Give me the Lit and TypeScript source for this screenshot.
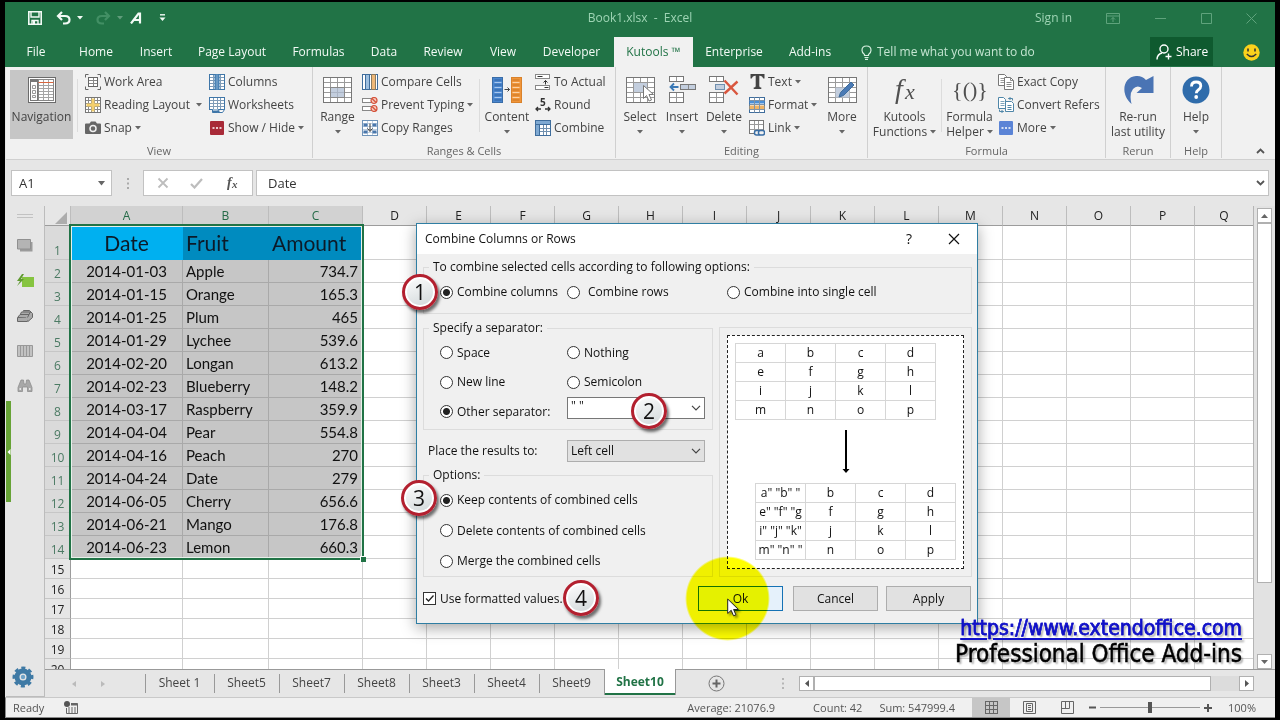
import { LitElement, html, css, svg, nothing, TemplateResult } from 'lit';
import { customElement } from 'lit/decorators.js';
import { classMap } from 'lit/directives/class-map.js';

type Row = [string, string, string];

const DATA: Row[] = [
  ['2014-01-03', 'Apple', '734.7'],
  ['2014-01-15', 'Orange', '165.3'],
  ['2014-01-25', 'Plum', '465'],
  ['2014-01-29', 'Lychee', '539.6'],
  ['2014-02-20', 'Longan', '613.2'],
  ['2014-02-23', 'Blueberry', '148.2'],
  ['2014-03-17', 'Raspberry', '359.9'],
  ['2014-04-04', 'Pear', '554.8'],
  ['2014-04-16', 'Peach', '270'],
  ['2014-04-24', 'Date', '279'],
  ['2014-06-05', 'Cherry', '656.6'],
  ['2014-06-21', 'Mango', '176.8'],
  ['2014-06-23', 'Lemon', '660.3'],
];
const COLS = 'ABCDEFGHIJKLMNOPQ'.split('');
const TABS = ['File', 'Home', 'Insert', 'Page Layout', 'Formulas', 'Data', 'Review', 'View', 'Developer', 'Kutools ™', 'Enterprise', 'Add-ins'];
const SHEETS = ['Sheet 1', 'Sheet5', 'Sheet7', 'Sheet8', 'Sheet3', 'Sheet4', 'Sheet9', 'Sheet10'];

const ic = (w: number, h: number, body: TemplateResult) =>
  html`<svg width=${w} height=${h} viewBox="0 0 ${w} ${h}" fill="none" aria-hidden="true">${body}</svg>`;

/* A ruled rectangle: the base of most spreadsheet icons. */
const grid = (x: number, y: number, w: number, h: number, c: number, r: number, stroke = '#777', inner = '#9a9a9a', fill = '#fff') => {
  let d = '';
  for (let i = 1; i < c; i++) d += `M${Math.round(x + (w * i) / c)} ${y}v${h}`;
  for (let i = 1; i < r; i++) d += `M${x} ${Math.round(y + (h * i) / r)}h${w}`;
  return svg`<rect x=${x} y=${y} width=${w} height=${h} fill=${fill}/><path d=${d} stroke=${inner}/><rect x=${x} y=${y} width=${w} height=${h} stroke=${stroke}/>`;
};
const half = (b: TemplateResult) => svg`<g transform="translate(.5 .5)">${b}</g>`;

const caret = html`<svg class="caret" width="6" height="4" viewBox="0 0 6 4" aria-hidden="true"><path d="M0 0h6L3 3.6z" fill="#666"/></svg>`;
const chevron = html`<svg class="chev" width="10" height="6" viewBox="0 0 10 6" fill="none" aria-hidden="true"><path d="M1 .8 5 4.8 9 .8" stroke="#444" stroke-width="1.2"/></svg>`;

const I = {
  nav: ic(28, 26, half(svg`<rect x="0" y="0" width="27" height="25" fill="#fff" stroke="#6b6b6b"/>${grid(2, 2, 7, 21, 1, 1)}${grid(10, 2, 15, 21, 3, 7, '#888', '#a5a5a5')}<path d="M2 3.500h7" stroke="#777" stroke-width="2"/><path d="M10 5h15" stroke="#d9673f"/><path d="M4 8h3v3h-3zM4 13h3v3h-3zM4 18h3v2h-3z" stroke="#999"/>`)),
  workArea: ic(16, 16, half(svg`<path d="M3 0H0v3M12 0h3v3M3 15H0v-3M12 15h3v-3" stroke="#666"/>${grid(3, 3, 9, 9, 2, 3, '#666', '#888')}`)),
  reading: ic(16, 16, half(svg`${grid(0, 0, 15, 15, 5, 5, '#777', '#888')}<path d="M7.500 1v13M1 7.500h13" stroke="#f4cf6c" stroke-width="3"/>`)),
  snap: ic(16, 13, svg`<path d="M1 2.500h3.500L6 .5h4.500L12 2.500h3q1 0 1 1V12q0 1-1 1H1q-1 0-1-1V3.500q0-1 1-1z" fill="#666"/><circle cx="8" cy="7.500" r="3" stroke="#f1f1f1" stroke-width="1.500"/>`),
  columns: ic(16, 16, half(svg`${grid(0, 0, 15, 15, 4, 5, '#3f76a8', '#7f9cb8')}<rect x="5" y="0" width="5" height="15" fill="#4a83b6"/><path d="M7.500 0v15" stroke="#89aed0"/>`)),
  worksheets: ic(16, 16, half(svg`${grid(0, 0, 15, 12, 4, 4, '#3f76a8', '#7f9cb8')}<path d="M3 12v3h5l1-3M8 15h5l2-3" stroke="#3f76a8" fill="#fff"/><path d="M3 14h7" stroke="#3f76a8" stroke-width="2"/>`)),
  showHide: ic(14, 14, svg`<rect width="14" height="14" rx="1" fill="#a82a38"/><path d="M2.500 7h2M6 7h2M9.500 7h2" stroke="#fff" stroke-width="1.500"/>`),
  range: ic(29, 26, half(svg`${grid(0, 0, 28, 25, 4, 5)}<rect x="7" y="10" width="14" height="10" fill="#c3cede"/><path d="M7 15h14M14 10v10" stroke="#aab4c4"/><rect x="7" y="10" width="14" height="10" stroke="#888"/>`)),
  compare: ic(16, 16, half(svg`<rect x="0" y="0" width="15" height="15" fill="#fff" stroke="#3f6d9c"/><rect x="3" y="0" width="4" height="15" fill="#9dbfe0" stroke="#3f6d9c"/><rect x="9" y="0" width="4" height="15" fill="#efb878" stroke="#8a7a60"/>`)),
  prevent: ic(16, 15, half(svg`<rect x="0" y="1" width="9" height="4" fill="#fff" stroke="#888"/><rect x="0" y="9" width="9" height="4" fill="#fff" stroke="#888"/><g stroke="#d5533b" fill="#f6c9bd" stroke-width="1.200"><circle cx="11.500" cy="3" r="3"/><circle cx="11.500" cy="11" r="3"/><path d="M9.500 1l4 4M9.500 9l4 4"/></g>`)),
  copyRanges: ic(16, 16, half(svg`${grid(0, 0, 15, 15, 3, 5, '#6f93b8', '#c0d0e0')}<path d="M1 3h4v3H1zM10 3h4v3h-4zM1 10h4v3H1zM10 10h4v3h-4z" fill="#4a77ab"/><path d="M7.500 3v7M5 8l2.500 3L10 8" stroke="#333"/>`)),
  content: ic(30, 26, half(svg`<rect x="0" y="0" width="10" height="25" fill="#4a86cf" stroke="#3a6da8"/><path d="M2 5h7M2 10h7M2 15h7M2 20h7" stroke="#a9c8ee"/><path d="M2 2.500h7M2 7.500h7M2 12.500h7M2 17.500h7M2 22.500h7" stroke="#2e62a0"/><rect x="19" y="0" width="10" height="25" fill="#f0953a" stroke="#d9822b"/><path d="M20 5h7M20 10h7M20 15h7M20 20h7" stroke="#fbd3a4"/><path d="M20 2.500h7M20 7.500h7M20 12.500h7M20 17.500h7M20 22.500h7" stroke="#c97720"/><path d="M12 12h5M15 10l2 2-2 2" stroke="#444"/>`)),
  actual: ic(16, 16, half(svg`<rect x="0" y="0" width="14" height="4" fill="#fff" stroke="#888"/><rect x="0" y="11" width="14" height="4" fill="#fff" stroke="#888"/><path d="M2 2h5M9 13h4" stroke="#333"/><path d="M10 10V6M8 8l2-2 2 2" stroke="#333"/>`)),
  round: ic(16, 20, svg`<text x="5" y="11" font-size="10" font-weight="700" font-family="Open Sans, sans-serif" fill="#333">5</text><path d="M1 14h5M3 12l-2 2 2 2M10 14h5M13 12l2 2-2 2" stroke="#333" stroke-width="1.300"/>`),
  combine: ic(16, 16, half(svg`${grid(0, 0, 15, 15, 4, 4, '#3f6d9c', '#6f8fae')}<rect x="0" y="0" width="15" height="4" fill="#7fa9d2" stroke="#3f6d9c"/><rect x="0" y="4" width="4" height="11" fill="#7fa9d2" stroke="#3f6d9c"/>`)),
  select: ic(29, 26, half(svg`${grid(0, 0, 28, 25, 4, 5)}<rect x="7" y="5" width="14" height="10" fill="#c3cede" stroke="#999"/><path d="M17 8v13l3-3 2.500 5.500 2.500-1-2.500-5.500H27z" fill="#fff" stroke="#777"/>`)),
  insert: ic(27, 28, half(svg`${grid(0, 0, 14, 5, 2, 1)}${grid(0, 16, 14, 10, 2, 2)}${grid(11, 8, 15, 5, 2, 1, '#777', '#888', '#c3cede')}<path d="M9 10.500H1M4.500 7l-3.500 3.500L4.500 14" stroke="#3a78b5" stroke-width="1.800"/>`)),
  del: ic(30, 28, half(svg`${grid(0, 0, 14, 5, 2, 1)}${grid(0, 16, 14, 10, 2, 2)}<rect x="6" y="8" width="9" height="5" fill="#c3cede" stroke="#6f8fae"/><path d="M15 4l13 14M28 5L15 17" stroke="#d9573f" stroke-width="2.400"/>`)),
  text: ic(15, 15, svg`<path d="M.5 0h14v4.500h-1.200Q12.500 2 10 1.800H9.300V12q0 1.500 2 1.600V15H3.700v-1.400q2-.1 2-1.600V1.800H5Q2.500 2 1.700 4.500H.5z" fill="#444"/>`),
  format: ic(16, 16, half(svg`<rect x="0" y="0" width="15" height="15" fill="#fff" stroke="#3f6d9c"/><rect x="0" y="3" width="15" height="3" fill="#4a90d9"/><rect x="0" y="8" width="15" height="4" fill="#f0b465"/><path d="M0 3h15M0 7h15M0 12h15M5 0v15M10 0v15" stroke="#7f93a8"/>`)),
  link: ic(16, 16, half(svg`${grid(0, 0, 14, 13, 3, 3)}<g stroke="#3a6ea5" stroke-width="1.500" fill="#f1f1f1"><rect x="5" y="10" width="6" height="4.500" rx="2"/><rect x="9" y="10" width="6" height="4.500" rx="2"/></g>`)),
  more: ic(29, 26, half(svg`${grid(0, 0, 28, 25, 4, 5)}<rect x="7" y="10" width="14" height="10" fill="#c3cede"/><path d="M22.500 4.500l3 3L15 18l-4.500 1.500L12 15z" fill="#4a7ab5" stroke="#3f6d9c"/>`)),
  fx: ic(28, 38, svg`<g font-family="Liberation Serif, serif" font-style="italic" fill="#505050"><text x="4" y="27" font-size="28">f</text><text x="14" y="28" font-size="22">x</text></g>`),
  braces: ic(40, 36, svg`<text x="20" y="25" text-anchor="middle" font-family="Liberation Serif, serif" font-size="22" fill="#505050">{()}</text>`),
  exact: ic(16, 16, half(svg`<path d="M0 0h6l2 2v9H0z" fill="#fff" stroke="#777"/><path d="M2 4h4M2 6h4M2 8h4" stroke="#999"/><path d="M6 3h6l3 3v9H6z" fill="#fff" stroke="#777"/><path d="M12 3v3h3M8 8h5M8 10h5M8 12h5" stroke="#888"/>`)),
  convert: ic(16, 16, half(svg`<path d="M0 0h5l2 2v9H0z" fill="#fff" stroke="#4f86a8"/><path d="M2 4h4M2 6h4M2 8h4" stroke="#7fa5bd"/><path d="M7 4h6l2 2v8H7z" fill="#fff" stroke="#4f86a8"/><path d="M9 8h4M9 10h4M9 12h4M10 1h4v2M12 0l-2 1 2 1M1 12v2h4M3 13l2 1-2 1" stroke="#4f86a8"/>`)),
  moreBlue: ic(14, 14, svg`<rect width="14" height="14" rx="1" fill="#5b84d6"/><path d="M2.500 7h2M6 7h2M9.500 7h2" stroke="#fff" stroke-width="1.500"/>`),
  rerun: ic(31, 30, svg`<path d="M8.500 29C-3 19 0 2 13 1q6-.5 10 4l7.500-4v17H13.500l5.500-5q-5-3.500-9 1-4 5-1.500 15z" fill="#4a74b4"/>`),
  help: ic(28, 28, svg`<circle cx="14" cy="14" r="13.500" fill="#2f6cab"/><path d="M9.500 10.500q0-4.500 4.700-4.500 4.600 0 4.600 4 0 2.300-2.600 4-1.900 1.300-1.900 3.300" stroke="#fff" stroke-width="2.800"/><circle cx="14.200" cy="21" r="1.900" fill="#fff"/>`),
};

const base = css`
  *, *::before, *::after { box-sizing: border-box; }
  button, input, select { font: inherit; color: inherit; margin: 0; }
  button { background: none; border: 0; padding: 0; cursor: default; }
  svg { display: block; flex: none; }
`;

@customElement('excel-ribbon')
class ExcelRibbon extends LitElement {
  static styles = [base, css`
    :host { display: flex; background: #f1f1f1; border-bottom: 1px solid #d0d0d0; color: #444; font-size: 12px; height: 93px; }
    .group { display: grid; grid-template-rows: 73px 18px; border-right: 1px solid #d0d0d0; margin-bottom: 1px; }
    .cols { display: grid; }
    .view { width: 307px; } .view .cols { grid-template-columns: 67px 132px 1fr; padding-left: 4px; }
    .ranges { width: 303px; } .ranges .cols { grid-template-columns: 49px 117px 56px 1fr; }
    .editing { width: 252px; } .editing .cols { grid-template-columns: 42px 42px 42px 73px 48px; padding-left: 3px; }
    .formula { width: 238px; } .formula .cols { grid-template-columns: 73px 57px 1fr; }
    .rerun { width: 65px; } .help { width: 51px; }
    .name { text-align: center; font-size: 11px; line-height: 22px; color: #666; white-space: nowrap; }
    .big { display: flex; flex-direction: column; align-items: center; width: 100%; margin-top: 3px; height: 69px; line-height: 16px; white-space: nowrap; }
    .big .pic { height: 39px; display: grid; place-items: center; }
    .big .line { display: flex; align-items: center; justify-content: center; gap: 3px; height: 15px; }
    .big.on { background: #c6c6c6; width: 63px; }
    .col { display: grid; grid-template-rows: repeat(3, 23px); padding-top: 3px; justify-items: start; }
    .ruled { position: relative; }
    .ruled::before { content: ''; position: absolute; left: 0; top: 12px; bottom: 8px; border-left: 1px solid #dcdcdc; }
    .indent { padding-left: 8px; } .indent4 { padding-left: 4px; }
    .small { display: flex; align-items: center; gap: 3px; height: 23px; white-space: nowrap; }
    .small .pic { width: 16px; display: grid; place-items: center; }
    .wide .caret { margin-left: 3px; }
    .collapse { margin-left: auto; align-self: end; padding: 8px 10px 5px; }
  `];

  big(icon: TemplateResult, a: string, b = '', arrow = true, cls = '') {
    return html`<div class=${cls}><button class=${classMap({ big: true, on: a === 'Navigation' })}>
      <span class="pic">${icon}</span><span class="line">${a}</span>
      <span class="line">${b}${arrow ? caret : nothing}</span></button></div>`;
  }
  small(icon: TemplateResult, label: string, arrow = false, cls = '') {
    return html`<button class="small ${cls}"><span class="pic">${icon}</span><span>${label}</span>${arrow ? caret : nothing}</button>`;
  }
  group(cls: string, name: string, body: TemplateResult) {
    return html`<section class="group ${cls}"><div class="cols">${body}</div><div class="name">${name}</div></section>`;
  }
  render() {
    return html`
      ${this.group('view', 'View', html`
        ${this.big(I.nav, 'Navigation', '', false)}
        <div class="col ruled indent">${this.small(I.workArea, 'Work Area')}${this.small(I.reading, 'Reading Layout', true, 'wide')}${this.small(I.snap, 'Snap', true)}</div>
        <div class="col">${this.small(I.columns, 'Columns')}${this.small(I.worksheets, 'Worksheets')}${this.small(I.showHide, 'Show / Hide', true)}</div>`)}
      ${this.group('ranges', 'Ranges & Cells', html`
        ${this.big(I.range, 'Range')}
        <div class="col">${this.small(I.compare, 'Compare Cells')}${this.small(I.prevent, 'Prevent Typing', true)}${this.small(I.copyRanges, 'Copy Ranges')}</div>
        ${this.big(I.content, 'Content', '', true, 'ruled')}
        <div class="col">${this.small(I.actual, 'To Actual')}${this.small(I.round, 'Round')}${this.small(I.combine, 'Combine')}</div>`)}
      ${this.group('editing', 'Editing', html`
        ${this.big(I.select, 'Select')}${this.big(I.insert, 'Insert')}${this.big(I.del, 'Delete')}
        <div class="col indent4">${this.small(I.text, 'Text', true)}${this.small(I.format, 'Format', true)}${this.small(I.link, 'Link', true)}</div>
        ${this.big(I.more, 'More')}`)}
      ${this.group('formula', 'Formula', html`
        ${this.big(I.fx, 'Kutools', 'Functions')}
        ${this.big(I.braces, 'Formula', 'Helper', true, 'ruled')}
        <div class="col">${this.small(I.exact, 'Exact Copy')}${this.small(I.convert, 'Convert Refers')}${this.small(I.moreBlue, 'More', true)}</div>`)}
      ${this.group('rerun', 'Rerun', this.big(I.rerun, 'Re-run', 'last utility', false))}
      ${this.group('help', 'Help', this.big(I.help, 'Help'))}
      <button class="collapse" aria-label="Collapse the ribbon"><svg width="9" height="6" viewBox="0 0 9 6" fill="none"><path d="M1 5 4.500 1.500 8 5" stroke="#555" stroke-width="1.800"/></svg></button>`;
  }
}

@customElement('excel-sheet')
class ExcelSheet extends LitElement {
  static styles = [base, css`
    :host { display: block; position: relative; min-height: 0; }
    .clip { height: 100%; overflow: hidden; background: #fff; border-right: 1px solid #b5b5b5; }
    table { table-layout: fixed; width: 100%; border-collapse: separate; border-spacing: 0; color: #111; }
    .c-n { width: 26px; } .c-a { width: 112px; } .c-b { width: 86px; } .c-c { width: 94px; } .c-x { width: 64px; }
    th, td { padding: 0; font-weight: 400; overflow: hidden; white-space: nowrap; }
    thead th { height: 20px; background: #e6e6e6; border-right: 1px solid #bdbdbd; border-bottom: 1px solid #9c9c9c; font-size: 12px; line-height: 18px; color: #222; }
    thead th:last-child { border-right: 0; }
    tbody th { background: #e6e6e6; border-right: 1px solid #9c9c9c; border-bottom: 1px solid #c6c6c6; font-size: 12px; line-height: 17px; vertical-align: bottom; color: #222; }
    thead th.sel-h { background: #d2d2d2; color: #256b48; }
    tbody th.sel-h { background: #dadada; color: #4b7a63; }
    td { border-right: 1px solid #d0d0d0; border-bottom: 1px solid #d0d0d0; }
    td:last-child { border-right: 0; }
    .r-head td, .r-head th { height: 34px; }
    .r-data td, .r-data th { height: 23px; }
    .r-empty td, .r-empty th { height: 20px; }
    .sel { background: #c6c6c6; border-color: #a9a9a9; font: 15px/20px Lato, sans-serif; }
    .date { text-align: center; } .fruit { padding-left: 3px; } .num { text-align: right; padding-right: 4px; }
    .title { font-size: 21px; line-height: 26px; background: #008bbf; border-color: #008bbf; color: #0c1a28; text-align: left; padding-left: 3px; }
    .title.date { background: #00b0f0; border-color: #00b0f0; text-align: center; padding-left: 0; }
    .corner { display: block; margin: 4px 3px 0 auto; }
    .range { position: absolute; left: 24px; top: 18px; width: 295px; height: 336px; border: 2px solid #217346; box-shadow: inset 0 0 0 1px #e8f0ea; pointer-events: none; }
    .range::after { content: ''; position: absolute; right: -4px; bottom: -4px; width: 6px; height: 6px; background: #217346; border: 1px solid #fff; border-width: 1px 0 0 1px; }
  `];
  render() {
    return html`<div class="clip"><table>
      <colgroup><col class="c-n"><col class="c-a"><col class="c-b"><col class="c-c">${COLS.slice(3, -1).map(() => html`<col class="c-x">`)}<col></colgroup>
      <thead><tr><th><svg class="corner" width="12" height="12" viewBox="0 0 12 12" aria-hidden="true"><path d="M12 0v12H0z" fill="#adadad"/></svg></th>
        ${COLS.map((c, i) => html`<th class=${i < 3 ? 'sel-h' : ''}>${c}</th>`)}</tr></thead>
      <tbody>
        <tr class="r-head"><th class="sel-h">1</th><td class="sel title date">Date</td><td class="sel title">Fruit</td><td class="sel title">Amount</td>${COLS.slice(3).map(() => html`<td></td>`)}</tr>
        ${DATA.map((r, i) => html`<tr class="r-data"><th class="sel-h">${i + 2}</th><td class="sel date">${r[0]}</td><td class="sel fruit">${r[1]}</td><td class="sel num">${r[2]}</td>${COLS.slice(3).map(() => html`<td></td>`)}</tr>`)}
        ${[15, 16, 17, 18, 19, 20].map((n) => html`<tr class="r-empty"><th>${n}</th>${COLS.map(() => html`<td></td>`)}</tr>`)}
      </tbody></table></div>
      <div class="range"></div>`;
  }
}

@customElement('combine-dialog')
class CombineDialog extends LitElement {
  static styles = [base, css`
    :host { display: block; width: 562px; background: #f0f0f0; border: 1px solid #2f7ea3; box-shadow: 0 4px 14px rgba(0, 0, 0, .35); font-size: 12px; color: #111; }
    header { display: flex; align-items: center; height: 30px; background: #fff; padding-left: 8px; }
    h2 { font: inherit; margin: 0 auto 0 0; }
    header button { width: 46px; height: 30px; display: grid; place-items: center; }
    header button:first-of-type { width: 44px; font-size: 14px; }
    form { padding: 5px 5px 0 6px; }
    fieldset { margin: 0; min-width: 0; border: 1px solid #dcdcdc; padding: 0 5px; }
    legend { padding: 0 4px; line-height: 16px; }
    label { display: flex; align-items: center; gap: 4px; white-space: nowrap; }
    .radio { appearance: none; width: 13px; height: 13px; border: 1px solid #333; border-radius: 50%; background: #fff; flex: none; }
    .radio:checked { background: radial-gradient(circle, #222 0 3px, #fff 4px); }
    .modes { display: grid; grid-template-columns: 127px 160px 1fr; height: 38px; padding: 7px 0 11px 11px; }
    .far { gap: 8px; }
    .split { display: grid; grid-template-columns: 290px 1fr; gap: 6px; margin-top: 6px; }
    .seps { display: grid; grid-template-columns: 127px 138px; grid-template-rows: 29px 30px 29px; padding: 2px 0 3px 11px; }
    .opts { display: grid; grid-template-rows: 30px 31px 30px; padding: 2px 0 0 11px; }
    .place { display: grid; grid-template-columns: 139px 138px; height: 22px; margin: 10px 0 5px 5px; align-items: center; }
    .pick { display: grid; align-items: center; height: 22px; }
    .pick > * { grid-area: 1 / 1; }
    .pick select { appearance: none; width: 100%; height: 22px; padding: 0 3px; border: 1px solid #adadad; border-radius: 0; background: #e1e1e1; line-height: 20px; }
    .pick .chev { justify-self: end; margin-right: 4px; pointer-events: none; }
    .edit { align-self: start; }
    .pick.edit select { background: #fff; border-color: #777; line-height: 16px; padding: 0 3px 4px; }
    .preview { margin-top: 7px; padding: 7px; }
    .canvas { height: 100%; display: flex; flex-direction: column; justify-content: space-between; background: #fff; border: 1px dashed #222; padding: 7px 7px 8px; }
    .canvas table { border-collapse: collapse; table-layout: fixed; width: 201px; line-height: 16px; }
    .canvas td { height: 19px; padding: 0; border: 1px solid #d6d6d6; text-align: center; white-space: nowrap; }
    .arrow { align-self: center; }
    .after { align-self: flex-end; }
    footer { display: flex; align-items: center; gap: 8px; padding: 9px 1px 12px 0; }
    footer label { margin-right: auto; }
    .tick { appearance: none; width: 13px; height: 13px; border: 1px solid #333; background: #fff; }
    .check { display: grid; } .check > * { grid-area: 1 / 1; } .check svg { pointer-events: none; }
    .btn { width: 85px; height: 25px; background: #e1e1e1; border: 1px solid #adadad; }
    .btn.ok { background: #e5f1fb; border-color: #1572b5; margin-right: 2px; }
  `];
  radio(group: string, label: string, on = false, cls = '') {
    return html`<label class=${cls}><input class="radio" type="radio" name=${group} ?checked=${on}>${label}</label>`;
  }
  table(rows: string[][], cls: string) {
    return html`<table class=${cls}>${rows.map((r) => html`<tr>${r.map((c) => html`<td>${c}</td>`)}</tr>`)}</table>`;
  }
  render() {
    return html`
      <header><h2>Combine Columns or Rows</h2><button aria-label="Help">?</button>
        <button aria-label="Close"><svg width="12" height="12" viewBox="0 0 12 12" fill="none"><path d="M1 1l10 10M11 1 1 11" stroke="#111" stroke-width="1.200"/></svg></button></header>
      <form>
        <fieldset><legend>To combine selected cells according to following options:</legend>
          <div class="modes">${this.radio('mode', 'Combine columns', true)}${this.radio('mode', 'Combine rows', false, 'far')}${this.radio('mode', 'Combine into single cell')}</div></fieldset>
        <div class="split">
          <div>
            <fieldset><legend>Specify a separator:</legend>
              <div class="seps">${this.radio('sep', 'Space')}${this.radio('sep', 'Nothing')}${this.radio('sep', 'New line')}${this.radio('sep', 'Semicolon')}${this.radio('sep', 'Other separator:', true)}
                <span class="pick edit"><select aria-label="Other separator"><option>" "</option></select>${chevron}</span></div></fieldset>
            <div class="place"><label for="place">Place the results to:</label><span class="pick"><select id="place"><option>Left cell</option></select>${chevron}</span></div>
            <fieldset><legend>Options:</legend>
              <div class="opts">${this.radio('opt', 'Keep contents of combined cells', true)}${this.radio('opt', 'Delete contents of combined cells')}${this.radio('opt', 'Merge the combined cells')}</div></fieldset>
          </div>
          <fieldset class="preview"><div class="canvas">
            ${this.table([['a', 'b', 'c', 'd'], ['e', 'f', 'g', 'h'], ['i', 'j', 'k', 'l'], ['m', 'n', 'o', 'p']], 'before')}
            <svg class="arrow" width="8" height="43" viewBox="0 0 8 43" aria-hidden="true"><path d="M3 0h2v39h2.500L4 43 .5 39H3z" fill="#000"/></svg>
            ${this.table([['a" "b" "', 'b', 'c', 'd'], ['e" "f" "g', 'f', 'g', 'h'], ['i" "j" "k"', 'j', 'k', 'l'], ['m" "n" "', 'n', 'o', 'p']], 'after')}
          </div></fieldset>
        </div>
        <footer><label><span class="check"><input class="tick" type="checkbox" checked><svg width="13" height="13" viewBox="0 0 13 13" fill="none" aria-hidden="true"><path d="M3 6.500 5.500 9 10.500 3.500" stroke="#222" stroke-width="1.300"/></svg></span>Use formatted values.</label>
          <button type="button" class="btn ok">Ok</button><button type="button" class="btn">Cancel</button><button type="button" class="btn">Apply</button></footer>
      </form>`;
  }
}

@customElement('app-root')
class AppRoot extends LitElement {
  static styles = [base, css`
    :host { display: block; background: #000; font: 12px/16px 'Open Sans', 'Noto Sans', sans-serif; }
    .window { position: relative; display: flex; flex-direction: column; height: 100vh; overflow: hidden; border: solid #000; border-width: 2px 5px 2px; background: #e6e6e6; padding-left: 1px; }
    .titlebar { display: grid; grid-template-columns: 1fr auto 1fr; align-items: center; height: 35px; margin-left: -1px; padding-bottom: 3px; background: #217346; color: #9fd5b5; }
    .quick { display: flex; align-items: center; padding-left: 23px; gap: 6px; }
    .quick .undo { margin-left: 8px; } .quick .redo { margin-left: 7px; } .quick .font { margin-left: 1px; } .quick .custom { margin-left: 11px; }
    .quick .redo, .quick .dim { opacity: .3; }
    .wins { display: flex; align-items: center; justify-content: flex-end; gap: 34px; padding-right: 18px; color: #5fa37c; }
    .wins .sign { color: #9fd5b5; } .wins .min { padding: 0 1px 0 1px; }
    .tabs { display: flex; align-items: stretch; height: 30px; margin-left: -1px; padding-left: 1px; background: #217346; color: #f2faf5; }
    .tabs nav { display: grid; grid-template-columns: 60px 60px 60px 92px 81px 50px 68px 52px 85px 79px 82px 70px; }
    .tabs a { display: grid; place-items: center; color: inherit; text-decoration: none; white-space: nowrap; }
    .tabs .active { background: #f1f1f1; color: #217346; }
    .tell { display: flex; align-items: center; gap: 5px; margin: 0 auto 0 16px; color: #c5e5d2; }
    .share { display: flex; align-items: center; gap: 4px; width: 63px; height: 29px; padding-left: 6px; background: #0f5a2f; color: #fff; }
    .smile { align-self: center; margin: 0 15px 0 30px; }
    .fbar { display: flex; height: 46px; padding: 10px 6px 10px 5px; color: #333; font-size: 13px; }
    .fbox { display: flex; align-items: center; background: #fff; border: 1px solid #c2c2c2; }
    .fbox input { border: 0; outline: 0; padding: 0; background: none; width: 100%; min-width: 0; }
    .namebox { width: 101px; padding: 0 6px 0 7px; } .dots { width: 31px; display: grid; place-items: center; }
    .tools { width: 110px; justify-content: space-around; margin-right: 3px; padding: 0 2px; } .formula { flex: 1; padding: 0 3px 0 11px; }
    .main { flex: 1; min-height: 0; display: grid; grid-template-columns: 39px 1fr 21px; grid-template-rows: minmax(0, 1fr) 28px; }
    .pane { grid-row: 1 / 3; display: flex; flex-direction: column; border-right: 1px solid #bcbcbc; border-bottom: 1px solid #bcbcbc; position: relative; }
    .pane .icons { display: flex; flex-direction: column; align-items: center; gap: 20px; padding-top: 8px; }
    .pane .icons button { height: 15px; display: grid; place-items: center; } .pane .icons .grip { height: 4px; }
    .handle { display: grid; place-items: center; position: absolute; left: 0; top: 195px; width: 5px; height: 101px; background: #67a336; }
    .gear { margin: auto auto 8px 6px; }
    .vscroll { display: flex; flex-direction: column; padding: 2px 3px 0; background: #e2e2e2; }
    .vscroll button, .hscroll button { display: grid; place-items: center; width: 15px; height: 15px; background: #fff; border: 1px solid #b0b0b0; }
    .vscroll .thumb { flex: 0 0 78%; background: #fff; border: 1px solid #b0b0b0; } .vscroll button:last-child { margin-top: auto; }
    .sheetbar { grid-column: 2 / 4; display: flex; align-items: center; border-top: 1px solid #999; color: #444; }
    .arrows { display: flex; gap: 25px; width: 100px; padding-left: 27px; }
    .sheets { display: flex; align-self: stretch; }
    .sheets a { width: 65px; display: grid; place-items: center; color: inherit; text-decoration: none; position: relative; margin-bottom: 1px; }
    .sheets a::before { content: ''; position: absolute; left: 0; top: 4px; height: 19px; border-left: 1px solid #999; }
    .sheets a:first-child { width: 69px; }
    .sheets a.cur { width: 72px; margin: -1px 0 2px; background: #fff; color: #217346; font-weight: 700; border: solid #999; border-width: 0 1px; box-shadow: inset 0 -2px #217346; }
    .sheets a.cur::before { content: none; }
    .add { margin: 0 auto 0 32px; }
    .hscroll { display: flex; margin: 0 21px 0 15px; width: 455px; background: #dcdcdc; } .hscroll .bar { width: 397px; background: #fff; border: 1px solid #b0b0b0; } .hscroll button:last-child { margin-left: auto; }
    .status { display: flex; align-items: center; height: 21px; margin-left: -1px; background: #f0f0f0; border: solid #8a8a8a; border-width: 0 0 1px 1px; border-top: 1px solid #c9c9c9; color: #555; font-size: 11px; white-space: nowrap; }
    .ready { padding: 0 20px 0 7px; } .avg { margin-left: auto; } .count { margin: 0 17px 0 38px; }
    .views { display: flex; align-self: stretch; margin-left: 17px; } .views button { width: 38px; display: grid; place-items: center; } .views .cur { background: #c6c6c6; }
    .zoom { display: flex; align-items: center; gap: 4px; margin-left: 3px; }
    .zoom input { appearance: none; width: 100px; height: 12px; background: linear-gradient(#999, #999) 0 50% / 100% 1px no-repeat; }
    .zoom input::-webkit-slider-thumb { appearance: none; width: 4px; height: 11px; background: #555; }
    .pct { margin: 0 19px 0 16px; }
    .dialog { position: absolute; left: 411px; top: 221px; }
    .glow { position: absolute; left: 680px; top: 554px; width: 85px; height: 85px; border-radius: 50%; background: radial-gradient(circle closest-side, #ff0 95%, rgba(255, 255, 0, 0)); mix-blend-mode: multiply; pointer-events: none; }
    .pointer { position: absolute; left: 722px; top: 596px; filter: drop-shadow(2px 2px 1px rgba(0, 0, 0, .4)); }
    .step { position: absolute; display: grid; place-items: center; width: 36px; height: 36px; border-radius: 50%; border: 3px solid #b3202f; background: linear-gradient(160deg, #fff, #cfd6d8); box-shadow: inset 0 0 0 2px #fff, 2px 3px 3px rgba(0, 0, 0, .55); font-size: 21px; color: #111; }
    .s1 { left: 397px; top: 272px; } .s2 { left: 626px; top: 391px; } .s3 { left: 396px; top: 478px; } .s4 { left: 558px; top: 578px; }
    .brand { position: absolute; right: 33px; bottom: 51px; display: grid; font: 24px/26px 'DejaVu Sans Condensed', 'Open Sans', sans-serif; color: #000; text-shadow: 2px 2px 2px rgba(0, 0, 0, .35); -webkit-text-stroke: .5px currentColor; white-space: nowrap; justify-items: end; }
    .brand a { color: #1010c8; font-size: 21px; text-underline-offset: 3px; }
  `];

  render() {
    const w = '#f2faf5';
    return html`<div class="window">
      <div class="titlebar">
        <div class="quick">
          <button aria-label="Save">${ic(14, 14, svg`<path d="M.8.8h12.400v12.400H.8z" stroke=${w} stroke-width="1.600"/><path d="M3 1v5h8V1M4 13V9.500h6V13" stroke=${w} stroke-width="1.400"/><path d="M5 10h2v3H5z" fill=${w}/>`)}</button>
          <button class="undo" aria-label="Undo">${ic(15, 14, svg`<path d="M2 5h7q4.500 0 4.500 3.700T9 12.500H7M6 1 2 5l4 4" stroke=${w} stroke-width="2.200"/>`)}</button>
          <svg width="6" height="4" viewBox="0 0 6 4"><path d="M0 0h6L3 3.500z" fill=${w}/></svg>
          <button class="redo" aria-label="Redo">${ic(15, 14, svg`<path d="M13 5H6q-4.500 0-4.500 3.700T6 12.500h2M9 1l4 4-4 4" stroke="#8fd0aa" stroke-width="2.200"/>`)}</button>
          <svg class="dim" width="6" height="4" viewBox="0 0 6 4"><path d="M0 0h6L3 3.500z" fill=${w}/></svg>
          <button class="font" aria-label="Font">${ic(12, 12, svg`<path d="M1 11.500 8.500 1.500h1.500L10 11.500M3.500 8h6" stroke=${w} stroke-width="2.200"/>`)}</button>
          <button class="custom" aria-label="Customize toolbar">${ic(7, 8, svg`<path d="M1 .8h5" stroke=${w} stroke-width="1.400"/><path d="M.5 3.500h6L3.500 7z" fill=${w}/>`)}</button>
        </div>
        <span>Book1.xlsx &nbsp;- &nbsp;Excel</span>
        <div class="wins"><span class="sign">Sign in</span>
          <button aria-label="Ribbon display options">${ic(14, 11, svg`<path d="M.5.5h13v10H.5zM.5 3h13M7 9V4.500M5 6.500l2-2 2 2" stroke="currentColor"/>`)}</button>
          <button class="min" aria-label="Minimize">${ic(11, 11, svg`<path d="M0 5.500h11" stroke="currentColor"/>`)}</button>
          <button aria-label="Maximize">${ic(11, 11, svg`<path d="M.5.5h10v10H.5z" stroke="currentColor"/>`)}</button>
          <button aria-label="Close">${ic(11, 11, svg`<path d="M.5.5l10 10M10.500.5l-10 10" stroke="currentColor"/>`)}</button></div>
      </div>
      <div class="tabs">
        <nav>${TABS.map((t) => html`<a href="#" class=${t.startsWith('Kutools') ? 'active' : ''}>${t}</a>`)}</nav>
        <button class="tell">${ic(11, 15, svg`<path d="M3.500 10.500V9.500Q1 8 1 5.200 1 1 5.500 1T10 5.200Q10 8 7.500 9.500v1zM3.500 12.500h4M4 14.300h3" stroke="#d5eede" stroke-width="1.200"/>`)}Tell me what you want to do</button>
        <button class="share">${ic(16, 16, svg`<circle cx="8" cy="5" r="4" stroke="#fff" stroke-width="1.400"/><path d="M1 15.500q0-5 5-6.500M9.500 12.500h6M12.500 9.500v6" stroke="#fff" stroke-width="1.400"/>`)}Share</button>
        <button class="smile" aria-label="Feedback">${ic(17, 17, svg`<circle cx="8.500" cy="8.500" r="8.200" fill="#fbd21c"/><path d="M5 4.500v3M12 4.500v3" stroke="#333" stroke-width="1.600"/><path d="M3.800 10q4.700 5 9.400 0" stroke="#333" stroke-width="1.400"/>`)}</button>
      </div>
      <excel-ribbon></excel-ribbon>
      <div class="fbar">
        <div class="fbox namebox"><input aria-label="Name box" value="A1"><svg width="7" height="5" viewBox="0 0 7 5"><path d="M0 0h7L3.500 4.500z" fill="#666"/></svg></div>
        <span class="dots"><svg width="2" height="11" viewBox="0 0 2 11"><path d="M0 0h2v2H0zM0 4.500h2v2H0zM0 9h2v2H0z" fill="#aaa"/></svg></span>
        <div class="fbox tools">
          <button aria-label="Cancel">${ic(12, 12, svg`<path d="M1.500 1.500l9 9M10.500 1.500l-9 9" stroke="#bdbdbd" stroke-width="1.800"/>`)}</button>
          <button aria-label="Enter">${ic(13, 12, svg`<path d="M1 7l3.500 3.500L12 2" stroke="#bdbdbd" stroke-width="2.200"/>`)}</button>
          <button aria-label="Insert function">${ic(16, 20, svg`<g font-family="Liberation Serif, serif" font-style="italic" font-weight="700" fill="#555"><text x="3" y="14" font-size="14">f</text><text x="8" y="15" font-size="11">x</text></g>`)}</button></div>
        <div class="fbox formula"><input aria-label="Formula bar" value="Date"><svg width="9" height="6" viewBox="0 0 9 6" fill="none"><path d="M1 1l3.500 3.500L8 1" stroke="#555" stroke-width="1.800"/></svg></div>
      </div>
      <div class="main">
        <aside class="pane">
          <div class="icons">
            <svg class="grip" width="16" height="4" viewBox="0 0 16 4"><path d="M0 .5h16M0 3.500h16" stroke="#c2c2c2"/></svg>
            <button aria-label="Workbooks">${ic(16, 13, svg`<path d="M3 3h12.500v9.500H3z" fill="#9b9b9b"/><path d="M.5.5h13V10H.5z" fill="#b4b4b4" stroke="#909090"/>`)}</button>
            <button aria-label="AutoText">${ic(17, 13, svg`<path d="M5 3h12v10H5z" fill="#86c440"/><path d="M5 0 0 7h3l-3 5 7-7H4l3-5z" fill="#5f9a30"/>`)}</button>
            <button aria-label="Names">${ic(16, 12, svg`<path d="M.5 7.500h10v4H.5z" fill="#aaa" stroke="#666"/><path d="M1 7l2-2.500h9l-1.500 3M3.500 4l1-2h9l-2 3M6 1.500l.5-1h6l3 3v4l-4.500 4" fill="#aaa" stroke="#666"/>`)}</button>
            <button aria-label="Columns">${ic(16, 12, svg`<path d="M.5.5h15v11H.5z" fill="#c2c2c2" stroke="#999"/><path d="M3.500 0v12M6.500 0v12M9.500 0v12M12.500 0v12" stroke="#999"/>`)}</button>
            <button aria-label="Find">${ic(16, 13, svg`<path d="M1 8.500 4 1h2.500L7 5h2l.5-4H12l3 7.500v4h-4.500V8h-5v4.500H1z" fill="#a8a8a8" stroke="#8e8e8e" stroke-width=".8"/><path d="M2.500 9h1.500v2H2.500zM12 9h1.500v2H12z" fill="#e6e6e6"/>`)}</button>
          </div>
          <button class="handle" aria-label="Hide pane">${ic(4, 6, svg`<path d="M3.500 0v6L.5 3z" fill="#fff"/>`)}</button>
          <button class="gear" aria-label="Settings">${ic(22, 22, svg`<circle cx="11" cy="11" r="6" stroke="#3f7aa5" stroke-width="5"/><circle cx="11" cy="11" r="9.200" stroke="#3f7aa5" stroke-width="2.600" stroke-dasharray="4 3.225" transform="rotate(-12 11 11)"/><circle cx="11" cy="11" r="2.200" fill="#6fa3c8"/>`)}</button>
        </aside>
        <excel-sheet></excel-sheet>
        <div class="vscroll"><button aria-label="Scroll up">${ic(7, 4, svg`<path d="M0 4h7L3.500 0z" fill="#666"/>`)}</button><div class="thumb"></div><button aria-label="Scroll down">${ic(7, 4, svg`<path d="M0 0h7L3.500 4z" fill="#666"/>`)}</button></div>
        <div class="sheetbar">
          <span class="arrows">${ic(4, 6, svg`<path d="M4 0v6L0 3z" fill="#bbb"/>`)}${ic(4, 6, svg`<path d="M0 0v6l4-3z" fill="#bbb"/>`)}</span>
          <nav class="sheets">${SHEETS.map((s) => html`<a href="#" class=${s === 'Sheet10' ? 'cur' : ''}>${s}</a>`)}</nav>
          <button class="add" aria-label="New sheet">${ic(17, 17, svg`<circle cx="8.500" cy="8.500" r="7.500" stroke="#777"/><path d="M4.500 8.500h8M8.500 4.500v8" stroke="#666" stroke-width="2"/>`)}</button>
          <svg width="2" height="11" viewBox="0 0 2 11"><path d="M0 0h2v2H0zM0 4.500h2v2H0zM0 9h2v2H0z" fill="#b5b5b5"/></svg>
          <div class="hscroll"><button aria-label="Scroll left">${ic(4, 7, svg`<path d="M4 0v7L0 3.500z" fill="#555"/>`)}</button><div class="bar"></div><button aria-label="Scroll right">${ic(4, 7, svg`<path d="M0 0v7l4-3.500z" fill="#555"/>`)}</button></div>
        </div>
      </div>
      <footer class="status">
        <span class="ready">Ready</span>
        ${ic(14, 13, svg`<path d="M2.500 7v5.500h11V2.500H7" stroke="#666"/><path d="M7 3.500h6.500" stroke="#666" stroke-width="2"/><circle cx="3" cy="3" r="3" fill="#555"/><path d="M4 7h2m1 0h2m1 0h2M4 9h2m1 0h2m1 0h2M4 11h2m1 0h2m1 0h2" stroke="#666"/>`)}
        <span class="avg">Average: 21076.9</span><span class="count">Count: 42</span><span>Sum: 547999.4</span>
        <span class="views">
          <button class="cur" aria-label="Normal">${ic(13, 13, half(grid(0, 0, 12, 12, 3, 3, '#666', '#666', 'none')))}</button>
          <button aria-label="Page layout">${ic(13, 13, svg`<path d="M.5.5h12v12H.5zM3.500 2.500h6v8h-6zM5 4.500h3M5 6.500h3M5 8.500h3" stroke="#666"/>`)}</button>
          <button aria-label="Page break">${ic(13, 13, svg`<path d="M.5.5h12v12H.5zM.5 7.500h8v-7M4.500.5v7" stroke="#666"/>`)}</button></span>
        <span class="zoom">${ic(7, 7, svg`<path d="M0 3.500h7" stroke="#555" stroke-width="2"/>`)}<input type="range" aria-label="Zoom" min="0" max="200" value="100">${ic(8, 8, svg`<path d="M0 4h8M4 0v8" stroke="#555" stroke-width="2"/>`)}</span>
        <span class="pct">100%</span>
      </footer>
      <combine-dialog class="dialog"></combine-dialog>
      <div class="glow"></div>
      ${[1, 2, 3, 4].map((n) => html`<div class="step s${n}">${n}</div>`)}
      <svg class="pointer" width="13" height="20" viewBox="0 0 13 20" aria-hidden="true"><path d="M.7 1v14.500l3.500-3.200 2.300 5.500 2.400-1-2.300-5.300h4.800z" fill="#fff" stroke="#222"/></svg>
      <div class="brand"><a href="https://www.extendoffice.com">https://www.extendoffice.com</a><span>Professional Office Add-ins</span></div>
    </div>`;
  }
}
